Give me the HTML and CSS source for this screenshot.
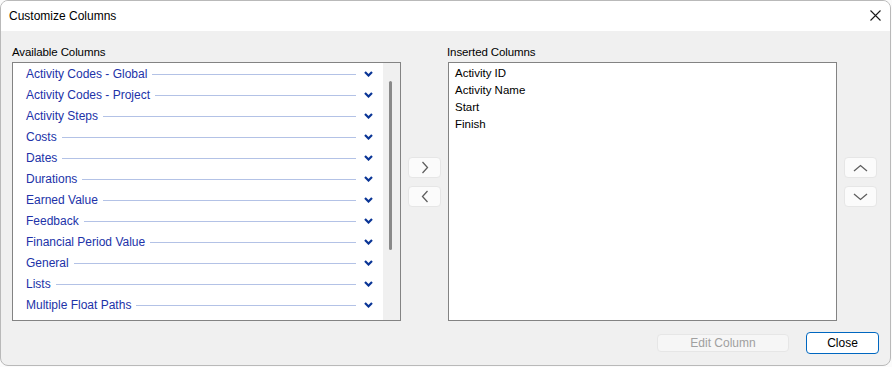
FILE: index.html
```html
<!DOCTYPE html>
<html lang="en">
<head>
  <meta charset="UTF-8">
  <title>Customize Columns</title>
  <link rel="stylesheet" href="styles.css">
</head>
<body>

  <div class="dialog">
    <div class="titlebar">
      <span class="title">Customize Columns</span>
      <button class="close-x" aria-label="Close">
        <svg width="11" height="11" viewBox="0 0 11 11"><path d="M0.5 0.5 L10.5 10.5 M10.5 0.5 L0.5 10.5" stroke="#1a1a1a" stroke-width="1.1" fill="none"/></svg>
      </button>
    </div>

    <div class="content">
      <div class="label">Available Columns</div>
      <div></div>
      <div class="label label-right">Inserted Columns</div>
      <div></div>

      <div class="listbox available">
        <ul class="groups">
          <li><span>Activity Codes - Global</span><i class="rule"></i><svg class="chev" viewBox="0 0 9 6"><path d="M1 1 L4.5 4.5 L8 1" /></svg></li>
          <li><span>Activity Codes - Project</span><i class="rule"></i><svg class="chev" viewBox="0 0 9 6"><path d="M1 1 L4.5 4.5 L8 1" /></svg></li>
          <li><span>Activity Steps</span><i class="rule"></i><svg class="chev" viewBox="0 0 9 6"><path d="M1 1 L4.5 4.5 L8 1" /></svg></li>
          <li><span>Costs</span><i class="rule"></i><svg class="chev" viewBox="0 0 9 6"><path d="M1 1 L4.5 4.5 L8 1" /></svg></li>
          <li><span>Dates</span><i class="rule"></i><svg class="chev" viewBox="0 0 9 6"><path d="M1 1 L4.5 4.5 L8 1" /></svg></li>
          <li><span>Durations</span><i class="rule"></i><svg class="chev" viewBox="0 0 9 6"><path d="M1 1 L4.5 4.5 L8 1" /></svg></li>
          <li><span>Earned Value</span><i class="rule"></i><svg class="chev" viewBox="0 0 9 6"><path d="M1 1 L4.5 4.5 L8 1" /></svg></li>
          <li><span>Feedback</span><i class="rule"></i><svg class="chev" viewBox="0 0 9 6"><path d="M1 1 L4.5 4.5 L8 1" /></svg></li>
          <li><span>Financial Period Value</span><i class="rule"></i><svg class="chev" viewBox="0 0 9 6"><path d="M1 1 L4.5 4.5 L8 1" /></svg></li>
          <li><span>General</span><i class="rule"></i><svg class="chev" viewBox="0 0 9 6"><path d="M1 1 L4.5 4.5 L8 1" /></svg></li>
          <li><span>Lists</span><i class="rule"></i><svg class="chev" viewBox="0 0 9 6"><path d="M1 1 L4.5 4.5 L8 1" /></svg></li>
          <li><span>Multiple Float Paths</span><i class="rule"></i><svg class="chev" viewBox="0 0 9 6"><path d="M1 1 L4.5 4.5 L8 1" /></svg></li>
        </ul>
        <div class="scrollbar"><div class="thumb"></div></div>
      </div>

      <div class="movers">
        <button class="small-btn">
          <svg width="8" height="13" viewBox="0 0 8 13"><path d="M1.5 1 L6.5 6.5 L1.5 12" /></svg>
        </button>
        <button class="small-btn">
          <svg width="8" height="13" viewBox="0 0 8 13"><path d="M6.5 1 L1.5 6.5 L6.5 12" /></svg>
        </button>
      </div>

      <div class="listbox inserted">
        <ul class="plain">
          <li>Activity ID</li>
          <li>Activity Name</li>
          <li>Start</li>
          <li>Finish</li>
        </ul>
      </div>

      <div class="movers">
        <button class="small-btn">
          <svg width="15" height="8" viewBox="0 0 15 8"><path d="M1 7 L7.5 1.5 L14 7" /></svg>
        </button>
        <button class="small-btn">
          <svg width="15" height="8" viewBox="0 0 15 8"><path d="M1 1 L7.5 6.5 L14 1" /></svg>
        </button>
      </div>
    </div>

    <div class="footer">
      <button class="btn btn-disabled" disabled>Edit Column</button>
      <button class="btn btn-default">Close</button>
    </div>
  </div>

</body>
</html>
```

FILE: styles.css
```css
/* Basic Reset */
* {
  margin: 0;
  padding: 0;
  box-sizing: border-box;
}

body {
  font-family: 'Liberation Sans', Arial, sans-serif;
  font-size: 12px;
  background: #fbfbfb;
  width: 892px;
  height: 367px;
  overflow: hidden;
}

.dialog {
  width: 891px;
  height: 366px;
  background: #f0f0f0;
  border: 1px solid #b9b9b9;
  border-radius: 8px;
  overflow: hidden;
  display: flex;
  flex-direction: column;
}

.titlebar {
  height: 30px;
  background: #fff;
  display: flex;
  align-items: center;
  justify-content: space-between;
  padding-left: 8px;
  padding-right: 9px;
  flex-shrink: 0;
}

.title {
  font-size: 12px;
  color: #000;
}

.close-x {
  border: none;
  background: none;
  width: 11px;
  height: 11px;
  display: flex;
  margin-top: -1px;
}

.content {
  display: grid;
  grid-template-columns: 389px 33px 389px 33px;
  grid-template-rows: 18px 259px;
  column-gap: 7px;
  padding: 13px 0 0 11px;
}

.label {
  font-size: 11.5px;
  color: #000;
  line-height: 16px;
  letter-spacing: -0.1px;
}

.label-right {
  margin-left: -1px;
}

.listbox {
  background: #fff;
  border: 1px solid #838383;
  position: relative;
}

ul {
  list-style: none;
}

.groups {
  padding: 0 27px 0 13px;
}

.groups li {
  height: 21px;
  display: flex;
  align-items: center;
  color: #2132a8;
  font-size: 12px;
}

.groups li span {
  white-space: nowrap;
}

.rule {
  flex: 1;
  height: 1px;
  background: #b3c2e6;
  margin: 1px 8px 0 5px;
}

.chev {
  width: 9px;
  height: 6px;
  flex-shrink: 0;
  margin-top: 1px;
}

.chev path {
  fill: none;
  stroke: #0a3596;
  stroke-width: 2.2;
}

.scrollbar {
  position: absolute;
  top: 0;
  right: 0;
  width: 17px;
  height: 100%;
  background: #f0f0f0;
}

.thumb {
  position: absolute;
  left: 6px;
  top: 18px;
  width: 3px;
  height: 169px;
  border-radius: 2px;
  background: #8a8a8a;
}

.plain {
  padding: 2px 6px;
}

.plain li {
  height: 17px;
  line-height: 17px;
  color: #000;
  font-size: 11.5px;
}

.movers {
  display: flex;
  flex-direction: column;
  gap: 8px;
  padding-top: 95px;
}

.small-btn {
  width: 33px;
  height: 21px;
  border: 1px solid #e6e6e6;
  border-radius: 4px;
  background: #fbfbfb;
  display: flex;
  align-items: center;
  justify-content: center;
}

.small-btn path {
  fill: none;
  stroke: #5f5f5f;
  stroke-width: 1.3;
}

.footer {
  display: flex;
  justify-content: flex-end;
  align-items: center;
  gap: 17px;
  padding: 11px 11px 0 0;
}

.btn {
  font-family: 'Liberation Sans', Arial, sans-serif;
  font-size: 12px;
  border-radius: 4px;
}

.btn-disabled {
  width: 132px;
  height: 18px;
  background: #f6f6f6;
  border: 1px solid #e6e6e6;
  color: #a0a0a0;
}

.btn-default {
  width: 73px;
  height: 22px;
  background: #fff;
  border: 1px solid #0067c0;
  color: #000;
}
```
